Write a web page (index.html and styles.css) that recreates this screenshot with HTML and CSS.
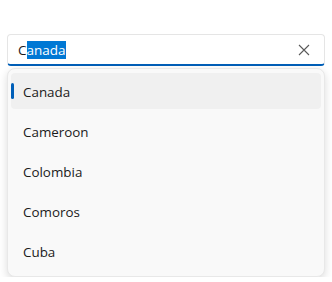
FILE: index.html
```html
<!DOCTYPE html>
<html>
<head>
<meta charset="utf-8">
<link rel="stylesheet" href="styles.css">
</head>
<body>
<div class="wrap">
  <div class="box">
    <span class="value">C<span class="sel">anada</span></span>
    <svg class="clear" width="12" height="12" viewBox="0 0 12 12"><path d="M1 1 L11 11 M11 1 L1 11" stroke="#5a5a5a" stroke-width="1.1" fill="none"/></svg>
  </div>
  <div class="list">
    <div class="item active"><span class="bar"></span>Canada</div>
    <div class="item">Cameroon</div>
    <div class="item">Colombia</div>
    <div class="item">Comoros</div>
    <div class="item">Cuba</div>
  </div>
</div>
</body>
</html>
```
FILE: styles.css
```css
html, body { margin: 0; padding: 0; background: #ffffff; }
body { font-family: "Segoe UI", "Open Sans", "Noto Sans", sans-serif; font-size: 13.4px; color: #1b1b1b; }
.wrap { padding: 34px 7px 0 7px; display: flex; flex-direction: column; gap: 2px; }
.box {
  box-sizing: border-box; height: 32px;
  border: 1px solid #e5e5e5; border-bottom: 2px solid #005fb8; border-radius: 4px;
  display: flex; align-items: center; padding: 0 14px 0 10px; background: #fff;
  font-size: 13.5px;
}
.value { flex: 1; line-height: 18px; }
.sel { background: #0078d4; color: #fff; }
.clear { display: block; }
.list {
  background: #f9f9f9; border: 1px solid #e8e8e8; border-radius: 8px;
  box-shadow: 0 3px 8px rgba(0,0,0,0.14);
  padding: 4px 3px; display: flex; flex-direction: column; gap: 4px; height: 209px; box-sizing: border-box;
}
.item { height: 36px; border-radius: 4px; display: flex; align-items: center; padding-left: 12px; padding-top: 1px; box-sizing: border-box; position: relative; }
.item.active { background: #f0f0f0; }
.bar { position: absolute; left: 0; top: 10px; width: 3px; height: 16px; border-radius: 2px; background: #005fb8; }
```
